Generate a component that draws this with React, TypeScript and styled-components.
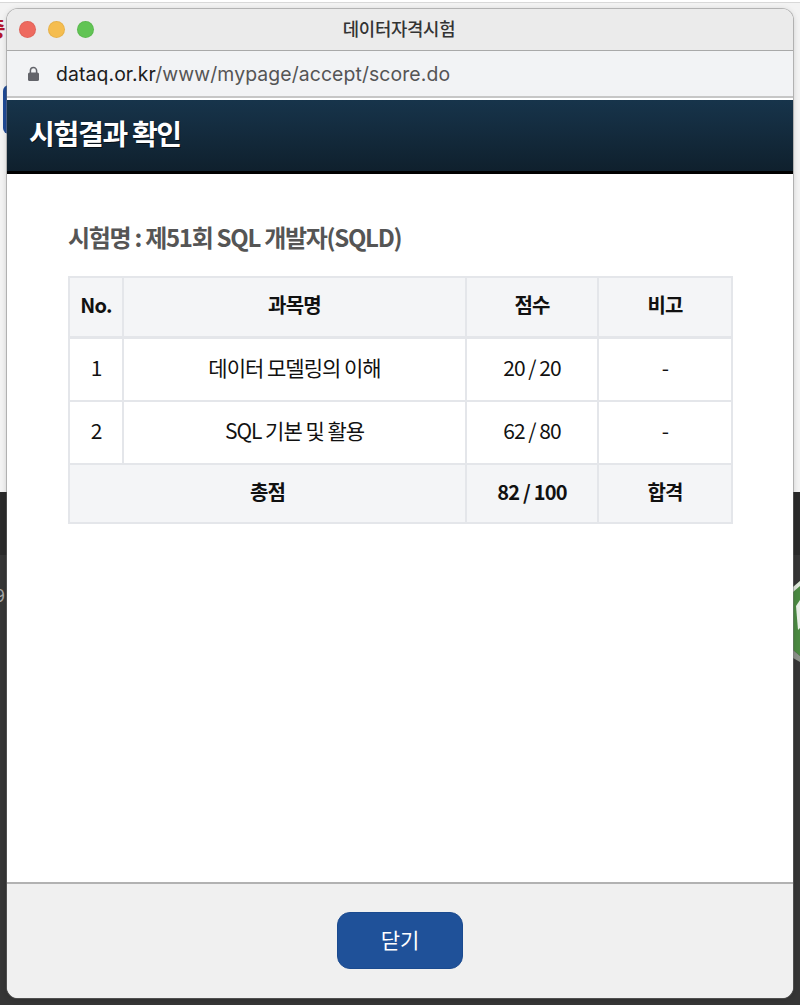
import styled, { createGlobalStyle } from 'styled-components';

const GlobalStyle = createGlobalStyle`
  html, body {
    margin: 0;
    padding: 0;
    width: 800px;
    height: 1005px;
    overflow: hidden;
    background: #f2f2f2;
  }
  * { box-sizing: border-box; }
`;

const krFont = `"Noto Sans CJK KR", "Noto Sans", sans-serif`;

const Page = styled.div`
  position: relative;
  width: 800px;
  height: 1005px;
  overflow: hidden;
  display: flex;
  flex-direction: column;
  font-family: ${krFont};
`;

const BackdropTop = styled.div`
  height: 492px;
  background: #f3f3f3;
  border-top: 3px solid #fff;
  position: relative;
`;

const BackdropBand = styled.div`
  height: 63px;
  background: #2b2b2b;
`;

const BackdropBottom = styled.div`
  flex: 1;
  background: #363636;
`;

const TopEdge = styled.div`
  position: absolute;
  top: -3px;
  left: 0;
  right: 0;
  height: 3px;
  border-bottom: 1px solid #d8d8d8;
`;

const RedGlyph = styled.span`
  position: absolute;
  left: -13px;
  top: 11px;
  font-size: 20px;
  font-weight: 700;
  color: #b3162d;
`;

const BlueTab = styled.div`
  position: absolute;
  left: 3px;
  top: 82px;
  width: 12px;
  height: 49px;
  border-radius: 6px;
  background: #1f4a96;
`;

const DimDigit = styled.span`
  position: absolute;
  left: -5px;
  top: 581px;
  font-size: 18px;
  color: #a8a8a8;
`;

const LogoPeek = styled.svg`
  position: absolute;
  left: 793px;
  top: 578px;
`;

const Window = styled.div`
  position: absolute;
  left: 7px;
  top: 9px;
  width: 786px;
  height: 989px;
  display: flex;
  flex-direction: column;
  border-radius: 11px;
  overflow: hidden;
  background: #fff;
  box-shadow: 0 0 0 1px rgba(120, 120, 120, 0.45), 0 1px 6px rgba(0, 0, 0, 0.18);
`;

const TitleBar = styled.div`
  position: relative;
  height: 42px;
  flex: none;
  display: flex;
  align-items: center;
  justify-content: center;
  padding-bottom: 3px;
  background: #ebebeb;
  border-bottom: 1px solid #a9a9a9;
`;

const Lights = styled.div`
  position: absolute;
  left: 12px;
  top: 12px;
  display: flex;
  gap: 12px;
`;

const Light = styled.span<{ $color: string }>`
  width: 17px;
  height: 17px;
  border-radius: 50%;
  background: ${p => p.$color};
  box-shadow: inset 0 0 0 1px rgba(0, 0, 0, 0.06);
`;

const WindowTitle = styled.div`
  font-size: 17.8px;
  font-weight: 500;
  color: #333;
  letter-spacing: -0.3px;
  margin-left: -2px;
`;

const AddressBar = styled.div`
  height: 47px;
  flex: none;
  display: flex;
  align-items: center;
  gap: 16px;
  padding: 1px 0 0 20px;
  background: #f2f3f5;
  border-bottom: 2px solid #c6c6c6;
  font-family: "Inter", "Liberation Sans", sans-serif;
  font-size: 19.4px;
  color: #555;
`;

const Host = styled.span`
  color: #1c1c1c;
`;

const Url = styled.div`
  letter-spacing: 0.1px;
`;

const Banner = styled.div`
  height: 74px;
  flex: none;
  margin-top: 2px;
  display: flex;
  align-items: center;
  padding: 0 0 6px 22px;
  background: linear-gradient(#17344b, #0f202d);
  border-bottom: 3px solid #000;
`;

const BannerTitle = styled.h1`
  margin: 0;
  font-size: 28px;
  font-weight: 700;
  color: #fff;
  letter-spacing: -1.3px;
  text-shadow: 1px 1px 0 rgba(0, 0, 0, 0.6);
`;

const Body = styled.div`
  flex: 1;
  padding: 45px 61px 0;
  background: #fff;
`;

const ExamName = styled.h2`
  margin: 0 0 21px;
  height: 36px;
  line-height: 36px;
  font-size: 24px;
  font-weight: 700;
  color: #555;
  letter-spacing: -1.3px;
`;

const ScoreTable = styled.table`
  width: 663px;
  table-layout: fixed;
  border-collapse: collapse;
  border: 2px solid #e4e6ea;
  font-size: 21px;
  color: #111;
  letter-spacing: -1px;
`;

const Th = styled.th`
  height: 60px;
  padding: 0 0 4px;
  background: #f4f5f7;
  border: 2px solid #e4e6ea;
  border-bottom-width: 3px;
  font-weight: 700;
  font-size: 20px;
  letter-spacing: -0.8px;
`;

const Td = styled.td`
  height: 63.5px;
  padding: 0 0 5px;
  text-align: center;
  font-weight: 400;
  border: 2px solid #e4e6ea;
`;

const TotalTd = styled.td`
  height: 59px;
  padding: 0 0 5px;
  text-align: center;
  font-weight: 700;
  font-size: 20px;
  letter-spacing: -0.8px;
  background: #f4f5f7;
  border: 2px solid #e4e6ea;
`;

const Footer = styled.div`
  height: 116px;
  flex: none;
  display: flex;
  justify-content: center;
  padding-top: 28px;
  background: #f0f0f0;
  border-top: 2px solid #b2b2b2;
`;

const CloseButton = styled.button`
  width: 126px;
  height: 57px;
  padding: 0 0 3px;
  border: 1px solid #1a4a8f;
  border-radius: 13px;
  background: #1f5199;
  color: #fff;
  font-family: ${krFont};
  font-size: 21px;
  font-weight: 400;
`;

function LockIcon() {
  return (
    <svg width="13" height="16" viewBox="0 0 13 16">
      <path d="M3.4 7V4.6a3.1 3.1 0 0 1 6.2 0V7" fill="none" stroke="#63646a" strokeWidth="1.5" />
      <rect x="1" y="6.5" width="11" height="8.5" rx="1.6" fill="#63646a" />
    </svg>
  );
}

const subjects = [
  { no: 1, name: '데이터 모델링의 이해', score: '20 / 20' },
  { no: 2, name: 'SQL 기본 및 활용', score: '62 / 80' },
];

export default function App() {
  return (
    <Page>
      <GlobalStyle />
      <BackdropTop>
        <TopEdge />
        <RedGlyph>중</RedGlyph>
        <BlueTab />
      </BackdropTop>
      <BackdropBand />
      <BackdropBottom />
      <DimDigit>9</DimDigit>
      <LogoPeek width="7" height="86" viewBox="0 0 7 86">
        <path d="M7 3 L0 9 V72 L7 78 Z" fill="#4b8a42" />
        <path d="M3 28 L7 22 V50 L5 52 Z" fill="#e8efe6" />
        <path d="M0 72 L7 78 V84 L0 80 Z" fill="#8d938b" />
        <path d="M0 9 L7 3 V8 L0 14 Z" fill="#dfe7dc" />
      </LogoPeek>
      <Window>
        <TitleBar>
          <Lights>
            <Light $color="#ee6a5f" />
            <Light $color="#f5bd4f" />
            <Light $color="#61c454" />
          </Lights>
          <WindowTitle>데이터자격시험</WindowTitle>
        </TitleBar>
        <AddressBar>
          <LockIcon />
          <Url>
            <Host>dataq.or.kr</Host>/www/mypage/accept/score.do
          </Url>
        </AddressBar>
        <Banner>
          <BannerTitle>시험결과 확인</BannerTitle>
        </Banner>
        <Body>
          <ExamName>시험명 : 제51회 SQL 개발자(SQLD)</ExamName>
          <ScoreTable>
            <colgroup>
              <col width="54" />
              <col width="343" />
              <col width="132" />
              <col width="134" />
            </colgroup>
            <thead>
              <tr>
                <Th>No.</Th>
                <Th>과목명</Th>
                <Th>점수</Th>
                <Th>비고</Th>
              </tr>
            </thead>
            <tbody>
              {subjects.map(s => (
                <tr key={s.no}>
                  <Td>{s.no}</Td>
                  <Td>{s.name}</Td>
                  <Td>{s.score}</Td>
                  <Td>-</Td>
                </tr>
              ))}
              <tr>
                <TotalTd colSpan={2}>총점</TotalTd>
                <TotalTd>82 / 100</TotalTd>
                <TotalTd>합격</TotalTd>
              </tr>
            </tbody>
          </ScoreTable>
        </Body>
        <Footer>
          <CloseButton>닫기</CloseButton>
        </Footer>
      </Window>
    </Page>
  );
}
